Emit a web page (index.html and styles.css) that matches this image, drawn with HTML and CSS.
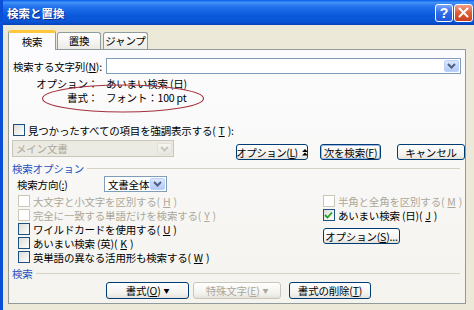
FILE: index.html
```html
<!DOCTYPE html>
<html lang="ja">
<head>
    <meta charset="UTF-8">
    <title>検索と置換</title>
    <link rel="stylesheet" href="styles.css">
</head>
<body>
<div class="window">
    <div class="titlebar">
        <span class="title">検索と置換</span>
        <div class="caption-btns">
            <span class="cap help">?</span>
            <span class="cap close">
                <svg width="11" height="11" viewBox="0 0 11 11"><path d="M1.5 1.5 L9.5 9.5 M9.5 1.5 L1.5 9.5" stroke="#fff" stroke-width="2" stroke-linecap="round"/></svg>
            </span>
        </div>
    </div>
    <div class="client">
        <div class="tabs">
            <div class="tab active">検索</div>
            <div class="tab">置換</div>
            <div class="tab">ジャンプ</div>
        </div>
        <div class="panel">
            <div class="row-find">
                <span class="find-label">検索する文字列(<u>N</u>):</span>
                <div class="combo">
                    <span class="combo-text"></span>
                    <span class="drop"><svg width="9" height="6" viewBox="0 0 9 6"><path d="M1 1 L4.5 4.5 L8 1" fill="none" stroke="#4D6185" stroke-width="2"/></svg></span>
                </div>
            </div>
            <div class="info">
                <span class="info-key">オプション：</span><span>あいまい検索 (日)</span>
                <span class="info-key">書式：</span><span>フォント：100 pt</span>
            </div>
            <label class="check-row highlight"><span class="box"></span>見つかったすべての項目を強調表示する(<u>T</u>):</label>
            <div class="row-actions">
                <div class="combo disabled doc">
                    <span class="combo-text">メイン文書</span>
                    <span class="drop"><svg width="9" height="6" viewBox="0 0 9 6"><path d="M1 1 L4.5 4.5 L8 1" fill="none" stroke="#C9C7BA" stroke-width="2"/></svg></span>
                </div>
                <div class="action-btns">
                    <span class="btn w-less"><span>オプション(<u>L</u>)</span><svg class="ups" width="6" height="7" viewBox="0 0 6 7"><path d="M3 0 L6 3 L0 3 Z M3 3.5 L6 6.5 L0 6.5 Z" fill="#000"/></svg></span>
                    <span class="btn default w-next">次を検索(<u>F</u>)</span>
                    <span class="btn w-cancel">キャンセル</span>
                </div>
            </div>
            <div class="group-sep"><span class="group-label">検索オプション</span><span class="line"></span></div>
            <div class="row-dir">
                <span class="dir-label">検索方向(<u>:</u>)</span>
                <div class="combo dir">
                    <span class="combo-text">文書全体</span>
                    <span class="drop"><svg width="9" height="6" viewBox="0 0 9 6"><path d="M1 1 L4.5 4.5 L8 1" fill="none" stroke="#4D6185" stroke-width="2"/></svg></span>
                </div>
            </div>
            <div class="options">
                <div class="opt-left">
                    <label class="check-row off"><span class="box"></span>大文字と小文字を区別する(<u>H</u>)</label>
                    <label class="check-row off"><span class="box"></span>完全に一致する単語だけを検索する(<u>Y</u>)</label>
                    <label class="check-row"><span class="box"></span>ワイルドカードを使用する(<u>U</u>)</label>
                    <label class="check-row"><span class="box"></span>あいまい検索 (英)(<u>K</u>)</label>
                    <label class="check-row"><span class="box"></span>英単語の異なる活用形も検索する(<u>W</u>)</label>
                </div>
                <div class="opt-right">
                    <label class="check-row off"><span class="box"></span>半角と全角を区別する(<u>M</u>)</label>
                    <label class="check-row"><span class="box checked"><svg width="9" height="8" viewBox="0 0 9 8"><path d="M1 4 L3.5 6.5 L8 1.5" fill="none" stroke="#21A121" stroke-width="1.8"/></svg></span>あいまい検索 (日)(<u>J</u>)</label>
                    <span class="btn w-opt">オプション(<u>S</u>)...</span>
                </div>
            </div>
            <div class="group-sep bottom"><span class="group-label">検索</span><span class="line"></span></div>
            <div class="row-bottom">
                <span class="btn w-fmt">書式(<u>O</u>) <span class="tri">▼</span></span>
                <span class="btn off w-special">特殊文字(<u>E</u>) <span class="tri">▼</span></span>
                <span class="btn w-clear">書式の削除(<u>T</u>)</span>
            </div>
        </div>
    </div>
    <svg class="mark" width="474" height="310" viewBox="0 0 474 310">
        <ellipse cx="120" cy="98.5" rx="80.5" ry="13.5" fill="none" stroke="#A3303E" stroke-width="1.1"/>
    </svg>
</div>
</body>
</html>
```

FILE: styles.css
```css
*{
    margin: 0;
    padding: 0;
    box-sizing: border-box;
}
body{
    font-family: "Noto Sans CJK JP", "Liberation Sans", sans-serif;
    font-size: 10.5px;
    letter-spacing: -0.2px;
    white-space: nowrap;
    color: #000;
}
u{
    text-decoration: underline;
}
.window{
    position: relative;
    width: 474px;
    height: 310px;
    overflow: hidden;
    background: #ECE9D8;
    border-left: 3px solid #0A4FD8;
}
.titlebar{
    display: flex;
    align-items: center;
    height: 25px;
    padding: 0 1px 0 4px;
    background: linear-gradient(180deg, #0A5CE8 0%, #4092F8 10%, #2473EE 25%, #0A5ADC 60%, #0954D4 88%, #0740B6 100%);
}
.title{
    color: #fff;
    font-size: 11.5px;
    font-weight: bold;
    letter-spacing: 0;
    text-shadow: 1px 1px 0 #0A2C8A;
}
.caption-btns{
    display: flex;
    gap: 1px;
    margin-left: auto;
}
.cap{
    display: flex;
    align-items: center;
    justify-content: center;
    height: 18px;
    border: 1px solid #fff;
    border-radius: 3px;
    color: #fff;
    font-family: "Liberation Sans", sans-serif;
    font-weight: bold;
    font-size: 14px;
}
.help{
    width: 18px;
    background: linear-gradient(180deg, #7AA6F8, #2E6AE8 50%, #2259DA);
}
.close{
    width: 19px;
    background: linear-gradient(180deg, #F0A088, #E05A34 50%, #C8401E);
}
.client{
    padding: 5px 0 0 5px;
}
.tabs{
    display: flex;
    align-items: flex-end;
    height: 19px;
}
.tab{
    display: flex;
    align-items: center;
    justify-content: center;
    height: 17px;
    margin-left: 1px;
    border: 1px solid #919B9C;
    border-bottom: none;
    border-radius: 3px 3px 0 0;
    background: linear-gradient(180deg, #FFFFFF, #ECEBE5);
    line-height: 14px;
}
.tab:nth-child(2){
    width: 44px;
}
.tab:nth-child(3){
    width: 45px;
    margin-left: 2px;
}
.tab.active{
    width: 48px;
    height: 20px;
    margin: 0 0 -1px 0;
    border-top: 3px solid #FFC83C;
    background: #FCFCFE;
    position: relative;
    z-index: 1;
}
.panel{
    width: 458px;
    height: 255px;
    border: 1px solid #919B9C;
    padding: 0 3px;
    background: linear-gradient(180deg, #FCFCFE, #F4F3EE);
    line-height: 13px;
}
.row-find{
    display: flex;
    align-items: center;
    height: 16px;
    margin-top: 8px;
}
.find-label{
    width: 94px;
    padding-left: 1px;
}
.combo{
    display: flex;
    align-items: center;
    height: 16px;
    border: 1px solid #7F9DB9;
    background: #fff;
    padding: 0 1px 0 3px;
}
.row-find .combo{
    width: 355px;
}
.combo-text{
    flex: 1;
}
.drop{
    display: flex;
    align-items: center;
    justify-content: center;
    width: 15px;
    height: 12px;
    border: 1px solid #BAD1FC;
    border-radius: 2px;
    background: linear-gradient(180deg, #DCE7FD, #B4CAF6);
}
.info{
    display: grid;
    grid-template-columns: 86px auto;
    grid-auto-rows: 14px;
    column-gap: 8px;
    margin-top: 3px;
    line-height: 14px;
}
.info-key{
    text-align: right;
}
.check-row{
    display: flex;
    align-items: center;
    gap: 3px;
    height: 14px;
}
.box{
    display: flex;
    align-items: center;
    justify-content: center;
    width: 12px;
    height: 12px;
    border: 1px solid #1C5180;
    background: linear-gradient(135deg, #DCDCD7, #FFFFFF);
}
.check-row.off{
    color: #ACA899;
}
.check-row.off .box{
    border-color: #CAC8BB;
    background: #fff;
}
.highlight{
    margin-top: 18px;
    padding-left: 1px;
}
.row-actions{
    display: flex;
    justify-content: space-between;
    height: 20px;
    margin-top: 3px;
    margin-right: -3px;
}
.combo.disabled{
    border-color: #C9C7BA;
    background: #EBEAE3;
    color: #ACA899;
}
.combo.disabled .drop{
    border-color: #E2E0D8;
    background: linear-gradient(180deg, #F6F5F1, #E7E6DF);
}
.doc{
    width: 162px;
    height: 17px;
}
.action-btns{
    display: flex;
    align-self: flex-end;
}
.btn{
    display: flex;
    align-items: center;
    justify-content: center;
    height: 16px;
    border: 1px solid #003C74;
    border-radius: 3px;
    background: linear-gradient(180deg, #FFFFFF, #F3F2EE 70%, #E4E2DA);
}
.btn.default{
    box-shadow: inset 0 0 0 1px #9DB9EB;
}
.btn.off{
    border-color: #C9C7BA;
    color: #ACA899;
}
.ups{
    flex: none;
    margin-left: 4px;
}
.w-less{
    width: 72px;
    letter-spacing: -0.5px;
}
.w-next{
    width: 61px;
    margin-left: 12px;
}
.w-cancel{
    width: 68px;
    margin-left: 16px;
}
.group-sep{
    display: flex;
    align-items: center;
    height: 12px;
    margin-top: 2px;
}
.group-label{
    color: #2452C0;
}
.line{
    flex: 1;
    margin: 1px 2px 0 3px;
    border-top: 1px solid #D5D2C4;
}
.row-dir{
    display: flex;
    align-items: center;
    height: 16px;
    margin-top: 2px;
}
.dir-label{
    width: 92px;
    padding-left: 5px;
}
.dir{
    width: 63px;
}
.options{
    display: flex;
    margin-top: 2px;
}
.opt-left{
    width: 325px;
    padding-left: 6px;
}
.w-opt{
    width: 77px;
    margin-top: 6px;
}
.group-sep.bottom{
    margin-top: 3px;
}
.row-bottom{
    display: flex;
    height: 17px;
    margin-top: 3px;
    padding-left: 94px;
}
.row-bottom .btn{
    height: 17px;
}
.tri{
    font-size: 6px;
    margin-left: 3px;
}
.w-fmt{
    width: 83px;
}
.w-special{
    width: 88px;
    margin-left: 4px;
}
.w-clear{
    width: 82px;
    margin-left: 8px;
}
.mark{
    position: absolute;
    left: 0;
    top: 0;
    pointer-events: none;
}
```
